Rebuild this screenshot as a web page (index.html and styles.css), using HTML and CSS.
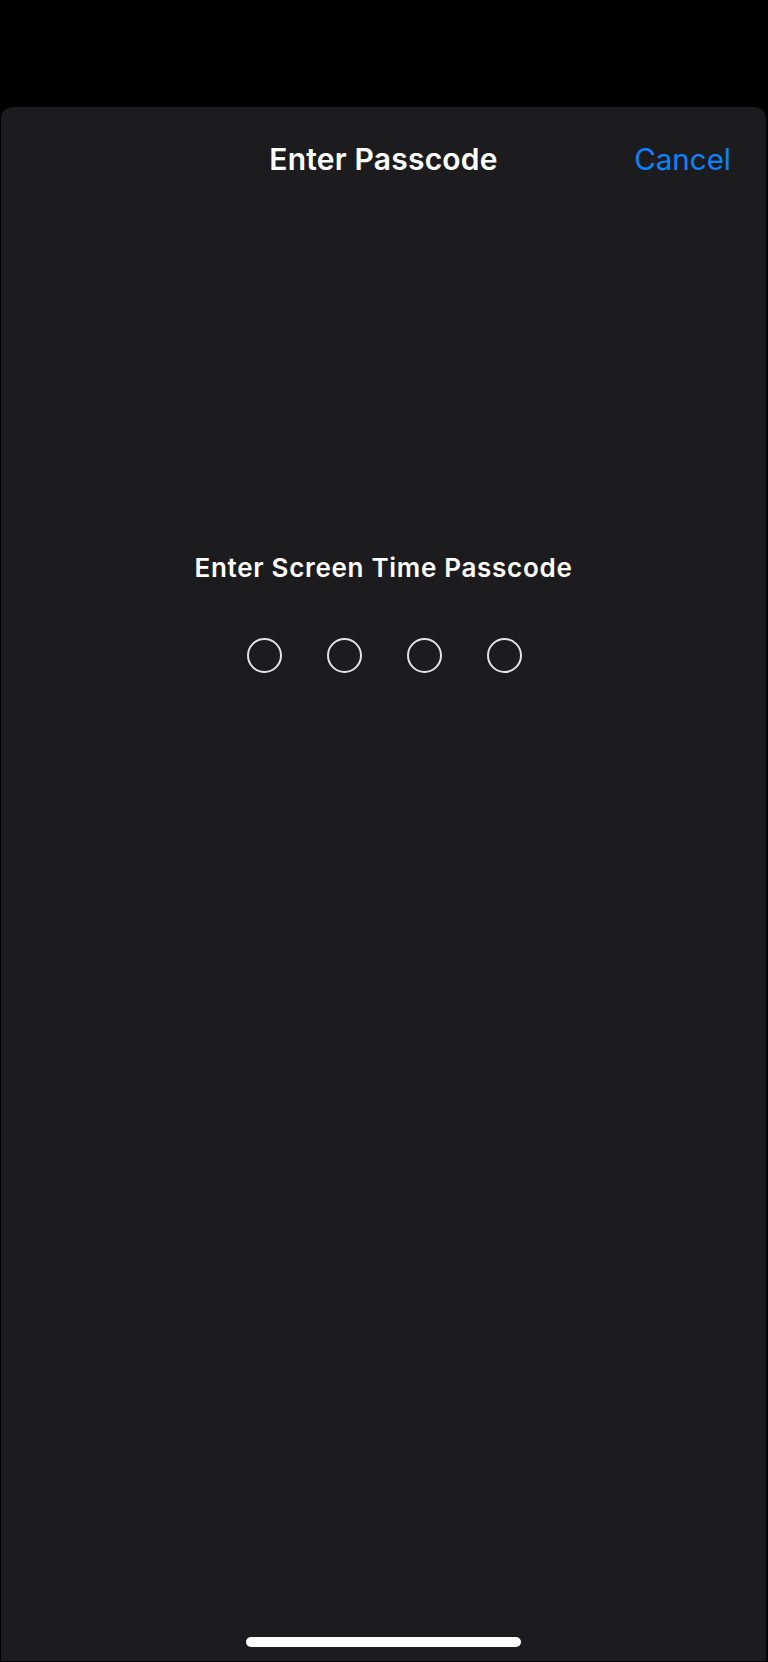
FILE: index.html
```html
<!DOCTYPE html>
<html lang="en">
<head>
<meta charset="utf-8">
<title>Enter Passcode</title>
<link rel="stylesheet" href="styles.css">
</head>
<body>
<div class="sheet">
  <header class="nav">
    <span class="nav-spacer"></span>
    <h1 class="nav-title">Enter Passcode</h1>
    <a class="nav-cancel" href="#">Cancel</a>
  </header>
  <main class="prompt">
    <p class="prompt-label">Enter Screen Time Passcode</p>
    <div class="dots">
      <span class="dot"></span>
      <span class="dot"></span>
      <span class="dot"></span>
      <span class="dot"></span>
    </div>
  </main>
  <div class="home-indicator"></div>
</div>
</body>
</html>
```
FILE: styles.css
```css
html, body {
  margin: 0;
  padding: 0;
  background: #000;
}
body {
  font-family: Inter, "Liberation Sans", sans-serif;
  color: #fff;
  height: 1662px;
  overflow: hidden;
}
.sheet {
  margin: 107px 2px 0 1px;
  height: 1554px;
  background: #1c1c1e;
  border-radius: 12px 12px 0 0;
  display: flex;
  flex-direction: column;
}
.nav {
  display: grid;
  grid-template-columns: 1fr auto 1fr;
  align-items: center;
  padding: 35px 35px 0 35px;
}
.nav-title {
  margin: 0;
  font-size: 30px;
  line-height: 34px;
  font-weight: 600;
  letter-spacing: 0.2px;
  text-align: center;
}
.nav-cancel {
  justify-self: end;
  font-size: 29.5px;
  line-height: 34px;
  font-weight: 400;
  color: #0a84ff;
  text-decoration: none;
}
.prompt {
  margin-top: 377px;
  display: flex;
  flex-direction: column;
  align-items: center;
}
.prompt-label {
  margin: 0;
  font-size: 26px;
  line-height: 30px;
  font-weight: 600;
  letter-spacing: 0.7px;
}
.dots {
  margin-top: 55px;
  display: flex;
  gap: 45px;
  padding-left: 1px;
}
.dot {
  width: 35px;
  height: 35px;
  box-sizing: border-box;
  border: 2px solid #e4e4e4;
  border-radius: 50%;
}
.home-indicator {
  margin: auto auto 14px;
  width: 275px;
  height: 10px;
  border-radius: 5px;
  background: #fff;
}
```
